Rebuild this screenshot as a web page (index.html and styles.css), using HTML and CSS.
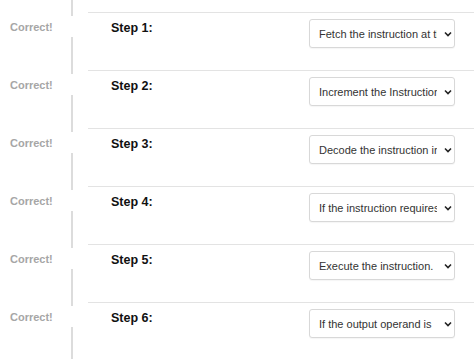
FILE: index.html
```html
<!DOCTYPE html>
<html>
<head>
<meta charset="utf-8">
<link rel="stylesheet" href="styles.css">
</head>
<body>
<div class="list">
  <div class="lead"><div class="rail"><span class="seg seg-fill"></span></div><div></div></div>

  <div class="row">
    <div class="rail">
      <span class="seg seg-top"></span>
      <span class="status">Correct!</span>
      <span class="seg seg-fill"></span>
    </div>
    <div class="body">
      <span class="label">Step 1:</span>
      <div class="pick">
        <select class="select"><option>Fetch the instruction at the address held in the Program Counter.</option></select>
        <svg class="chev" viewBox="0 0 8 6" width="8" height="6"><path d="M1 1.5 L4 4.5 L7 1.5" fill="none" stroke="#222" stroke-width="1.6"/></svg>
      </div>
    </div>
  </div>

  <div class="row">
    <div class="rail">
      <span class="seg seg-top"></span>
      <span class="status">Correct!</span>
      <span class="seg seg-fill"></span>
    </div>
    <div class="body">
      <span class="label">Step 2:</span>
      <div class="pick">
        <select class="select"><option>Increment the Instruction Pointer / Program Counter.</option></select>
        <svg class="chev" viewBox="0 0 8 6" width="8" height="6"><path d="M1 1.5 L4 4.5 L7 1.5" fill="none" stroke="#222" stroke-width="1.6"/></svg>
      </div>
    </div>
  </div>

  <div class="row">
    <div class="rail">
      <span class="seg seg-top"></span>
      <span class="status">Correct!</span>
      <span class="seg seg-fill"></span>
    </div>
    <div class="body">
      <span class="label">Step 3:</span>
      <div class="pick">
        <select class="select"><option>Decode the instruction into operation and operands.</option></select>
        <svg class="chev" viewBox="0 0 8 6" width="8" height="6"><path d="M1 1.5 L4 4.5 L7 1.5" fill="none" stroke="#222" stroke-width="1.6"/></svg>
      </div>
    </div>
  </div>

  <div class="row">
    <div class="rail">
      <span class="seg seg-top"></span>
      <span class="status">Correct!</span>
      <span class="seg seg-fill"></span>
    </div>
    <div class="body">
      <span class="label">Step 4:</span>
      <div class="pick">
        <select class="select"><option>If the instruction requires data from memory, fetch it.</option></select>
        <svg class="chev" viewBox="0 0 8 6" width="8" height="6"><path d="M1 1.5 L4 4.5 L7 1.5" fill="none" stroke="#222" stroke-width="1.6"/></svg>
      </div>
    </div>
  </div>

  <div class="row">
    <div class="rail">
      <span class="seg seg-top"></span>
      <span class="status">Correct!</span>
      <span class="seg seg-fill"></span>
    </div>
    <div class="body">
      <span class="label">Step 5:</span>
      <div class="pick">
        <select class="select"><option>Execute the instruction.</option></select>
        <svg class="chev" viewBox="0 0 8 6" width="8" height="6"><path d="M1 1.5 L4 4.5 L7 1.5" fill="none" stroke="#222" stroke-width="1.6"/></svg>
      </div>
    </div>
  </div>

  <div class="row">
    <div class="rail">
      <span class="seg seg-top"></span>
      <span class="status">Correct!</span>
      <span class="seg seg-fill"></span>
    </div>
    <div class="body">
      <span class="label">Step 6:</span>
      <div class="pick">
        <select class="select"><option>If the output operand is&nbsp;&nbsp;&nbsp;&nbsp;&nbsp;&nbsp;in memory, store the result.</option></select>
        <svg class="chev" viewBox="0 0 8 6" width="8" height="6"><path d="M1 1.5 L4 4.5 L7 1.5" fill="none" stroke="#222" stroke-width="1.6"/></svg>
      </div>
    </div>
  </div>
</div>
</body>
</html>
```
FILE: styles.css
```css
html, body {
  margin: 0;
  padding: 0;
  background: #fff;
  font-family: "Liberation Sans", Arial, sans-serif;
}
.list {
  display: flex;
  flex-direction: column;
}
.lead {
  display: grid;
  grid-template-columns: 88px 1fr;
  height: 12px;
}
.row {
  display: grid;
  grid-template-columns: 88px 1fr;
  height: 58px;
  flex-shrink: 0;
}
.rail {
  position: relative;
  display: flex;
  flex-direction: column;
  height: 100%;
}
.seg {
  display: block;
  width: 2px;
  margin-left: 71px;
  background: #dcdcdc;
}
.seg-top {
  height: 4px;
}
.seg-fill {
  flex: 1;
}
.status {
  height: 21px;
  display: flex;
  align-items: center;
  padding-left: 10px;
  font-size: 11px;
  font-weight: bold;
  color: #a6a6a6;
}
.body {
  border-top: 1px solid #e3e3e3;
  display: flex;
  justify-content: space-between;
  align-items: flex-start;
  padding: 0 19px 0 23px;
}
.label {
  margin-top: 8px;
  font-size: 12.5px;
  font-weight: bold;
  color: #111;
}
.pick {
  position: relative;
  margin-top: 6px;
}
.select {
  appearance: none;
  -webkit-appearance: none;
  width: 146px;
  height: 29px;
  border: 1px solid #d8d8d8;
  border-radius: 3px;
  background: #fff;
  padding: 0 17px 0 9px;
  font-family: "Liberation Sans", Arial, sans-serif;
  font-size: 11px;
  color: #333;
  box-shadow: 0 1px 1px rgba(0,0,0,0.04);
}
.chev {
  position: absolute;
  right: 3px;
  top: 12px;
  pointer-events: none;
}
```
